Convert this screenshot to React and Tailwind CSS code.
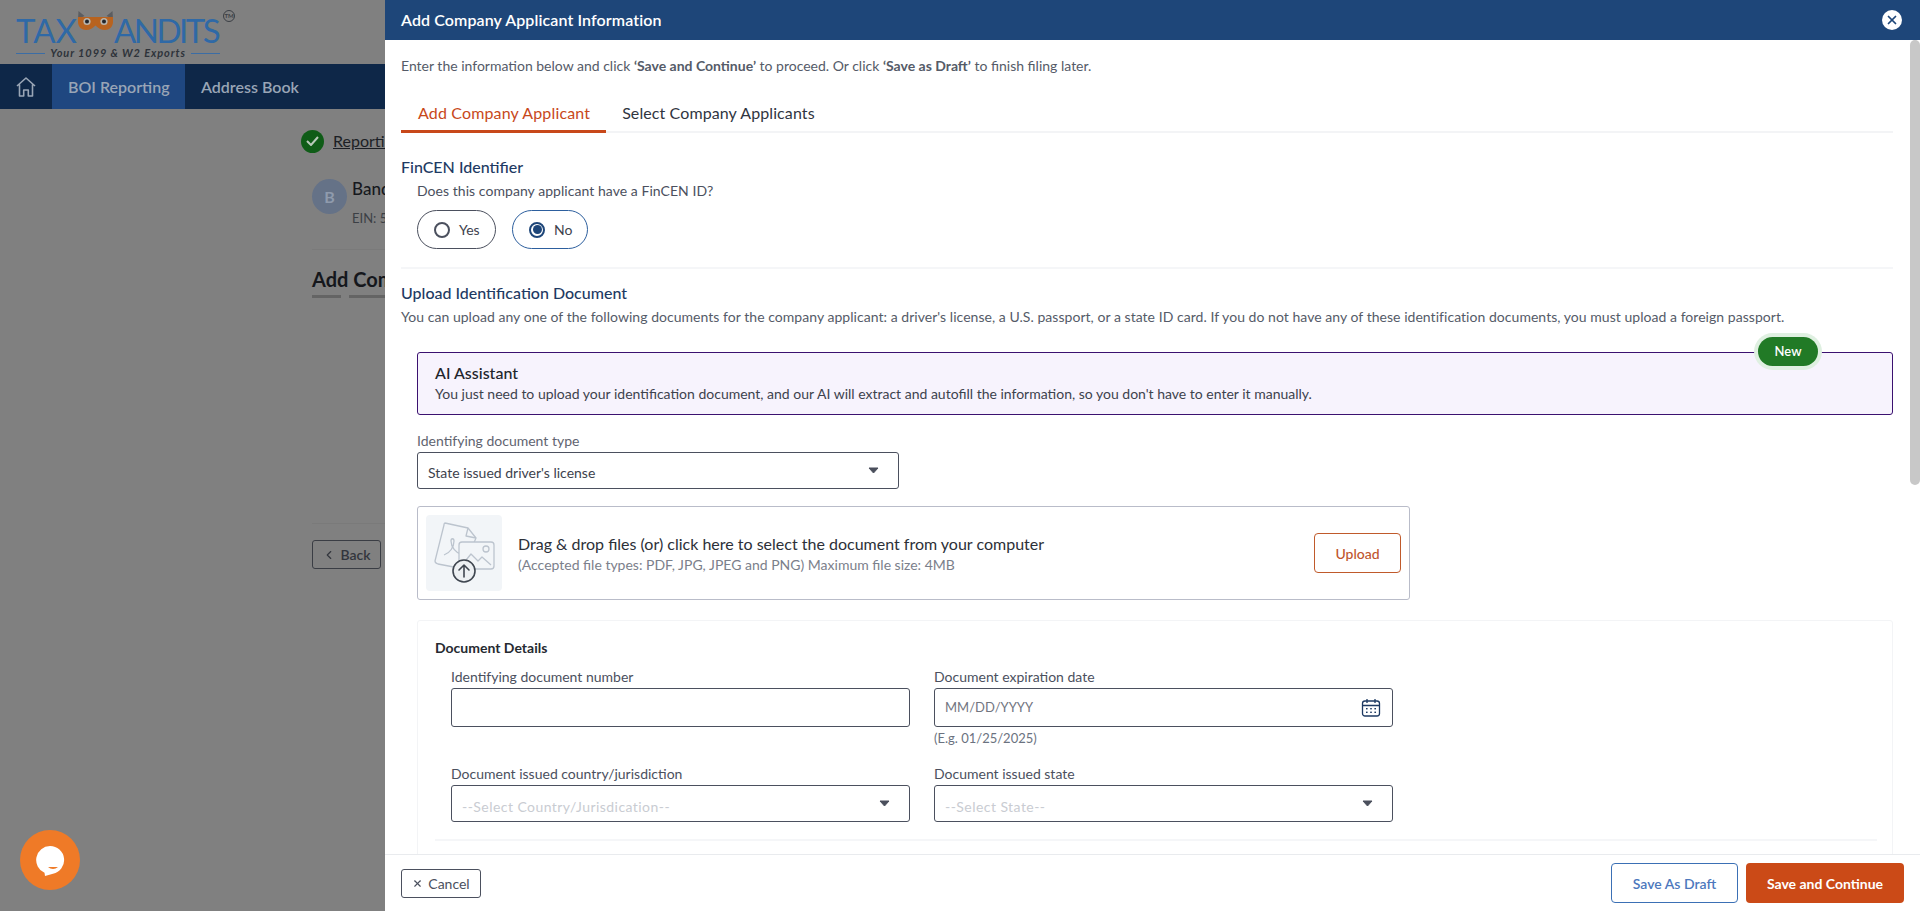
import { ChevronLeft, X } from "lucide-react";

function Caret({ className = "" }) {
  return (
    <svg width="11" height="7" viewBox="0 0 11 7" className={className}>
      <path d="M1 1h9L5.5 6z" fill="#4a4f5c" stroke="#4a4f5c" strokeLinejoin="round" />
    </svg>
  );
}

function CalendarIcon() {
  return (
    <svg width="20" height="20" viewBox="0 0 20 20" fill="none" stroke="#1e3a63" strokeWidth="1.3">
      <rect x="1.5" y="3" width="17" height="15" rx="2.5" />
      <path d="M1.5 7.5h17M6 1v4M14 1v4" />
      <g fill="#1e3a63" stroke="none">
        <rect x="5" y="10" width="1.6" height="1.4" />
        <rect x="9.2" y="10" width="1.6" height="1.4" />
        <rect x="13.4" y="10" width="1.6" height="1.4" />
        <rect x="5" y="13.6" width="1.6" height="1.4" />
        <rect x="9.2" y="13.6" width="1.6" height="1.4" />
        <rect x="13.4" y="13.6" width="1.6" height="1.4" />
      </g>
    </svg>
  );
}

function UploadArt() {
  return (
    <svg width="76" height="76" viewBox="0 0 76 76" fill="none" className="bg-[#f2f5f8] rounded-sm shrink-0">
      <g stroke="#bcc4ce" strokeWidth="1.3" strokeLinejoin="round">
        <path d="M19 8 42 13l8 10-3 7M33 53 12 49q-3-1-3-3l9-36q0-2 1-2" />
        <path d="M42 13l-2 8 10 2" />
        <path d="M18 40c6-2 10-8 10-14 0-3-3-3-3 0 0 6 5 12 10 13" />
        <rect x="33" y="27" width="35" height="27" rx="3" fill="#f2f5f8" />
        <path d="M36 50l9-11 7 7 4-4 9 8" />
        <circle cx="60" cy="34" r="3" />
      </g>
      <circle cx="38" cy="56" r="11" fill="#edf0f3" stroke="#3f4650" strokeWidth="1.6" />
      <path d="M38 62V50M33 55l5-5 5 5" stroke="#3f4650" strokeWidth="1.6" strokeLinecap="round" strokeLinejoin="round" />
    </svg>
  );
}

function Owl() {
  return (
    <svg width="37" height="24" viewBox="0 0 37 24" className="shrink-0 -mt-[5px]">
      <path d="M1 9 1.5 1l6 5zM36 9 35.5 1l-6 5z" fill="#5c5d60" />
      <path d="M1 7h35v5c0 5-4 8-8 8-4 0-7-2-9.500-4.500C16 18 13 20 9 20c-4 0-8-3-8-8z" fill="#b8631f" />
      <circle cx="10" cy="11.500" r="3.600" fill="#b9b5ad" />
      <circle cx="27" cy="11.500" r="3.600" fill="#b9b5ad" />
      <circle cx="10" cy="11.500" r="2" fill="#23262b" />
      <circle cx="27" cy="11.500" r="2" fill="#23262b" />
    </svg>
  );
}

function Logo() {
  return (
    <div className="h-16 pl-4 pt-[15px]">
      <div className="flex items-start h-[30px] text-[#2f69a6] text-[33px] leading-[30px] whitespace-nowrap">
        <span>TAX</span>
        <Owl />
        <span className="tracking-[-2.5px]">ANDITS</span>
        <span className="ml-[5px] -mt-[5px] w-[12px] h-[12px] rounded-full border border-[#3b3f45] text-[6px] leading-[10px] text-center text-[#3b3f45] font-bold">TM</span>
      </div>
      <div className="flex items-center gap-[5px] w-[204px] mt-px">
        <div className="h-px flex-1 bg-[#3b6da5]" />
        <span className="text-[11px] leading-[14px] italic font-bold tracking-[0.9px] text-[#2e333a] whitespace-nowrap">Your 1099 &amp; W2 Exports</span>
        <div className="h-px flex-1 bg-[#3b6da5]" />
      </div>
    </div>
  );
}

function Background() {
  return (
    <div className="w-[385px] h-full shrink-0 overflow-hidden bg-[#808080]">
      <Logo />
      <nav className="h-[45px] flex bg-[#0e2748] text-[16px] text-[#99a5b6] font-semibold whitespace-nowrap">
        <div className="w-[52px] flex items-center justify-center">
          <svg width="20" height="22" viewBox="0 0 20 22" fill="none" stroke="#9aa6b6" strokeWidth="1.6" strokeLinejoin="round">
            <path d="M1 10 10 2l9 8M3.500 8.500V20h4.200v-6h4.600v6h4.200V8.500" />
          </svg>
        </div>
        <div className="w-[133px] bg-[#1f4780] flex items-center pl-4">BOI Reporting</div>
        <div className="flex items-center pl-4">Address Book</div>
      </nav>
      <div className="pl-[301px] whitespace-nowrap">
        <div className="flex items-center gap-[9px] mt-5">
          <div className="w-[23px] h-[23px] rounded-full bg-[#0f5c17] flex items-center justify-center shrink-0">
            <svg width="13" height="10" viewBox="0 0 13 10" fill="none" stroke="#b9c9bb" strokeWidth="2">
              <path d="M1 5l4 4 7-8" />
            </svg>
          </div>
          <span className="text-[16px] text-[#1c1f25] underline">Reporting Company</span>
        </div>
        <div className="ml-[11px] flex gap-[5px] mt-[26px]">
          <div className="w-[35px] h-[35px] rounded-full bg-[#657287] text-[#8f9bad] text-[16px] font-bold flex items-center justify-center shrink-0">B</div>
          <div>
            <div className="text-[17px] leading-5 text-[#16181d] font-medium">Bandit Holdings</div>
            <div className="text-[13px] leading-5 mt-[9px] text-[#3c3f45]">EIN: 58-2231190</div>
          </div>
        </div>
        <div className="ml-[11px] h-px bg-[#7a7a7a] mt-[21px]" />
        <div className="ml-[11px] text-[20px] leading-7 font-bold text-[#15171c] mt-[15px]">Add Company Applicant</div>
        <div className="ml-[11px] flex gap-2 mt-[2px]">
          <div className="w-[33px] h-[3px] bg-[#646464]" />
          <div className="w-[40px] h-[3px] bg-[#646464]" />
        </div>
        <div className="ml-[11px] h-px bg-[#7a7a7a] mt-[225px]" />
        <div className="ml-[11px] mt-4 w-[69px] h-[29px] border border-[#3a3d44] rounded-[3px] flex items-center justify-center gap-1 text-[14px] font-semibold text-[#33363d]">
          <ChevronLeft size={14} />
          Back
        </div>
      </div>
    </div>
  );
}

function Field({ label, children, hint }) {
  return (
    <div className="w-[459px]">
      <div className="text-[14px] leading-5 text-[#4b505e]">{label}</div>
      <div className="mt-px">{children}</div>
      {hint && <div className="text-[13px] leading-[18px] mt-[2px] text-[#6b7280]">{hint}</div>}
    </div>
  );
}

function SelectBox({ text, muted, className = "" }) {
  return (
    <div className={`h-[37px] border border-[#4b505e] rounded-[3px] flex items-center justify-between pl-[10px] pr-[19px] ${className}`}>
      <span className={muted ? "text-[14px] pt-[5px] tracking-[0.45px] text-[#c9ccd2]" : "text-[14px] pt-[3px] text-[#3d424d]"}>{text}</span>
      <Caret />
    </div>
  );
}

function Radio({ label, checked }) {
  return (
    <div
      className={`h-[39px] rounded-[20px] border flex items-center gap-[9px] pl-[16px] ${
        checked ? "w-[76px] border-[#2d5f9e]" : "w-[79px] border-[#4b505e]"
      }`}
    >
      <div
        className={`w-4 h-4 rounded-full border-2 flex items-center justify-center ${
          checked ? "border-[#1e4679]" : "border-[#4b505e]"
        }`}
      >
        {checked && <div className="w-[9px] h-[9px] rounded-full bg-[#1e4679]" />}
      </div>
      <span className="text-[14px] text-[#3d424d]">{label}</span>
    </div>
  );
}

function Panel() {
  return (
    <div className="flex-1 min-w-0 h-full bg-white flex flex-col">
      <div className="h-10 shrink-0 bg-[#1e4679] flex items-center justify-between pl-4 pr-[18px]">
        <span className="text-[16px] tracking-[0.1px] font-semibold text-white">Add Company Applicant Information</span>
        <div className="w-5 h-5 rounded-full bg-white flex items-center justify-center">
          <X size={14} strokeWidth={3} color="#1e4679" />
        </div>
      </div>

      <div className="flex-1 min-h-0 flex overflow-hidden">
        <div className="flex-1 min-w-0 pl-4 pr-[17px] pt-4">
          <p className="text-[14px] leading-5 text-[#555b68]">
            Enter the information below and click <b className="font-bold">‘Save and Continue’</b> to proceed. Or click{" "}
            <b className="font-bold">‘Save as Draft’</b> to finish filing later.
          </p>

          <div className="mt-5 flex border-b-2 border-[#f3f4f6] h-[37px] text-[16px] leading-[22px] tracking-[0.15px]">
            <div className="h-[37px] border-b-[3px] border-[#c8481a] text-[#c8481a] pl-[17px] pr-4 pt-[6px]">Add Company Applicant</div>
            <div className="text-[#30353f] pl-4 pt-[6px] tracking-[0.1px]">Select Company Applicants</div>
          </div>

          <h3 className="mt-[23px] text-[16px] leading-[22px] text-[#1e3a63] font-medium">FinCEN Identifier</h3>
          <div className="ml-4 mt-[3px] text-[14px] tracking-[0.05px] leading-5 text-[#4b505e]">Does this company applicant have a FinCEN ID?</div>
          <div className="ml-4 mt-[9px] flex gap-4">
            <Radio label="Yes" />
            <Radio label="No" checked />
          </div>

          <div className="h-0.5 bg-[#f5f6f8] mt-[18px]" />

          <h3 className="mt-[13px] text-[16px] leading-[22px] text-[#1e3a63] font-medium">Upload Identification Document</h3>
          <p className="mt-[3px] text-[14px] tracking-[0.04px] leading-5 text-[#555b68] whitespace-nowrap">
            You can upload any one of the following documents for the company applicant: a driver's license, a U.S. passport, or a state ID card. If you do not have any of these identification documents, you must upload a foreign passport.
          </p>

          <div className="relative ml-4 mt-[25px] h-[63px] border border-[#3b1170] rounded-[3px] bg-[#f7f3fd] pl-[17px] pt-[9px]">
            <div className="text-[16px] leading-[22px] font-medium text-[#21242b]">AI Assistant</div>
            <div className="text-[14px] leading-5 text-[#3d424d]">You just need to upload your identification document, and our AI will extract and autofill the information, so you don't have to enter it manually.</div>
            <div className="absolute -top-[16px] right-[74px] w-[60px] h-[29px] rounded-full bg-[#217a26] ring-4 ring-[#dff0e1] text-white text-[13px] font-semibold flex items-center justify-center">New</div>
          </div>

          <div className="ml-4 mt-4 text-[14px] leading-5 text-[#5f6470]">Identifying document type</div>
          <SelectBox text="State issued driver's license" className="ml-4 mt-px w-[482px]" />

          <div className="ml-4 mt-[17px] w-[993px] h-[94px] border border-[#b9bcc9] rounded-[3px] flex items-center pl-[8px] pr-[8px]">
            <UploadArt />
            <div className="ml-4 flex-1 pt-px">
              <div className="text-[16px] leading-[22px] text-[#2c3038]">Drag &amp; drop files (or) click here to select the document from your computer</div>
              <div className="text-[14px] leading-5 text-[#7b808b]">(Accepted file types: PDF, JPG, JPEG and PNG) Maximum file size: 4MB</div>
            </div>
            <div className="w-[87px] h-10 border border-[#c05a2b] rounded-[4px] text-[14px] font-medium text-[#c0552d] flex items-center justify-center">Upload</div>
          </div>

          <div className="ml-4 mt-5 border border-[#f3f4f6] rounded-[3px] pt-[17px] pl-[17px] pr-[15px] h-[300px]">
            <div className="text-[14px] leading-5 font-bold text-[#262a31]">Document Details</div>
            <div className="ml-4 mt-[9px] grid grid-cols-[459px_459px] gap-x-6 gap-y-[17px]">
              <Field label="Identifying document number">
                <div className="h-[39px] border border-[#4b505e] rounded-[3px]" />
              </Field>
              <Field label="Document expiration date" hint="(E.g. 01/25/2025)">
                <div className="h-[39px] border border-[#4b505e] rounded-[3px] flex items-center justify-between pl-[10px] pr-[11px]">
                  <span className="text-[13px] pt-px text-[#71757f]">MM/DD/YYYY</span>
                  <CalendarIcon />
                </div>
              </Field>
              <Field label="Document issued country/jurisdiction">
                <SelectBox text="--Select Country/Jurisdication--" muted />
              </Field>
              <Field label="Document issued state">
                <SelectBox text="--Select State--" muted />
              </Field>
            </div>
            <div className="h-0.5 bg-[#f5f6f8] mt-[17px]" />
          </div>
        </div>

        <div className="w-[10px] shrink-0">
          <div className="h-[445px] bg-[#c8c8c8] rounded-[5px]" />
        </div>
      </div>

      <div className="h-[57px] shrink-0 border-t border-[#e9ebee] flex items-center justify-between pl-4 pr-4 bg-white">
        <div className="w-20 h-[29px] border border-[#4b505e] rounded-[3px] flex items-center justify-center gap-[5px] text-[14px] text-[#4b505e]">
          <X size={11} strokeWidth={2.5} />
          Cancel
        </div>
        <div className="flex gap-2">
          <div className="w-[127px] h-10 border border-[#3b70b5] rounded-[4px] flex items-center justify-center text-[14px] font-semibold text-[#4d78bd]">Save As Draft</div>
          <div className="w-[158px] h-10 bg-[#cb4a17] rounded-[4px] flex items-center justify-center text-[14px] font-bold text-white">Save and Continue</div>
        </div>
      </div>
    </div>
  );
}

export default function App() {
  return (
    <div className="relative flex w-full h-[911px] overflow-hidden font-[Lato,sans-serif]">
      <Background />
      <Panel />
      {/* chat launcher */}
      <div className="absolute left-5 top-[830px] w-[60px] h-[60px] rounded-full bg-[#ef7a27] flex items-center justify-center pt-[2px]">
        <svg width="30" height="32" viewBox="0 0 30 32">
          <path d="M15 1a14 14 0 0 1 3 27.700L10 31l-.500-3.200A14 14 0 0 1 15 1z" fill="#fff" />
          <path d="M13 22c3 2.500 7 2.500 10 0z" fill="#ef7a27" />
        </svg>
      </div>
    </div>
  );
}
